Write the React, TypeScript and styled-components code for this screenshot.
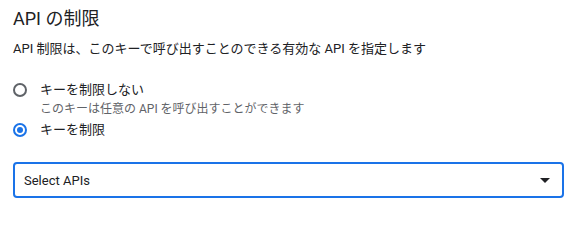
import React, { useState } from 'react';
import styled, { createGlobalStyle } from 'styled-components';

const GlobalStyle = createGlobalStyle`
	body {
		margin: 0;
		background: #ffffff;
		font-family: Roboto, 'Noto Sans CJK JP', sans-serif;
		color: #202124;
	}
`;

const Section = styled.section`
	padding: 7px 8px 0 13px;
	display: flex;
	flex-direction: column;
`;

const Title = styled.h2`
	margin: 0;
	font-size: 18px;
	line-height: 24px;
	font-weight: 400;
	color: #202124;
`;

const Description = styled.p`
	margin: 8px 0 0;
	font-size: 13px;
	line-height: 20px;
	color: #202124;
`;

const RadioGroup = styled.div`
	margin-top: 21px;
	display: flex;
	flex-direction: column;
	gap: 2px;
`;

const RadioRow = styled.label`
	display: grid;
	grid-template-columns: 27px 1fr;
	align-items: center;
	cursor: pointer;
`;

const RadioCircle = styled.span<{ checked: boolean }>`
	width: 14px;
	height: 14px;
	box-sizing: border-box;
	border-radius: 50%;
	border: 2px solid ${({ checked }) => (checked ? '#1a73e8' : '#5f6368')};
	display: flex;
	align-items: center;
	justify-content: center;

	&::after {
		content: '';
		width: 6px;
		height: 6px;
		border-radius: 50%;
		background: ${({ checked }) => (checked ? '#1a73e8' : 'transparent')};
	}
`;

const RadioLabel = styled.span`
	font-size: 13px;
	line-height: 20px;
	color: #202124;
`;

const RadioHint = styled.span`
	grid-column: 2;
	font-size: 12px;
	line-height: 18px;
	color: #5f6368;
`;

const SelectBox = styled.button`
	margin-top: 22px;
	height: 36px;
	box-sizing: border-box;
	border: 2px solid #1a73e8;
	border-radius: 4px;
	background: #ffffff;
	padding: 0 12px 0 9px;
	display: flex;
	align-items: center;
	justify-content: space-between;
	font-family: inherit;
	font-size: 13px;
	color: #202124;
	cursor: pointer;
`;

const options = [
	{ id: 'none', label: 'キーを制限しない', hint: 'このキーは任意の API を呼び出すことができます' },
	{ id: 'restrict', label: 'キーを制限' },
];

export default function App() {
	const [selected, setSelected] = useState('restrict');
	return (
		<>
			<GlobalStyle />
			<Section>
				<Title>API の制限</Title>
				<Description>
					API 制限は、このキーで呼び出すことのできる有効な API を指定します
				</Description>
				<RadioGroup>
					{options.map((option) => (
						<RadioRow key={option.id} onClick={() => setSelected(option.id)}>
							<RadioCircle checked={selected === option.id} />
							<RadioLabel>{option.label}</RadioLabel>
							{option.hint && <RadioHint>{option.hint}</RadioHint>}
						</RadioRow>
					))}
				</RadioGroup>
				<SelectBox type="button">
					<span>Select APIs</span>
					<svg width="10" height="5" viewBox="0 0 10 5">
						<path d="M0 0 L10 0 L5 5 Z" fill="#202124" />
					</svg>
				</SelectBox>
			</Section>
		</>
	);
}
